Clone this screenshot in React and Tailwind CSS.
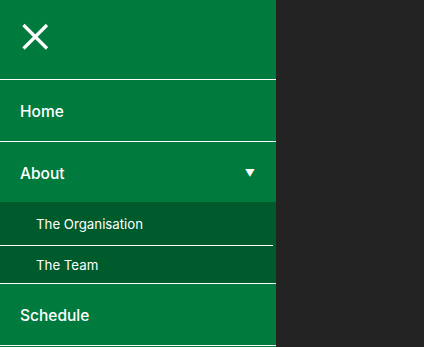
import React, { useState } from 'react';

export default function App() {
  const [open, setOpen] = useState(true);

  return (
    <div className="flex h-[347px] w-[424px] overflow-hidden bg-[#232323]" style={{ fontFamily: 'Inter, "Noto Sans", sans-serif' }}>
      {/* Side menu */}
      <nav className="w-[276px] shrink-0 bg-[#007a3d] text-white">
        <div className="flex h-[80px] items-center border-b border-white pl-[21px]">
          <svg width="28" height="28" viewBox="0 0 28 28" className="-mt-[6px]">
            <path d="M2.5 2 L26 25.5 M26 2 L2.5 25.5" stroke="white" strokeWidth="3.2" strokeLinecap="butt" />
          </svg>
        </div>

        <ul>
          <li className="flex h-[62px] items-center border-b border-white px-5 pt-[3px] text-[15.5px] font-medium">Home</li>
          <li className="border-b border-white">
            <button
              onClick={() => setOpen(!open)}
              className="flex h-[60px] w-full items-center justify-between px-5 pt-[3px] text-[15.5px] font-medium"
            >
              <span>About</span>
              <span className="mr-[1px] text-[10px]">▼</span>
            </button>
            {open && (
              <ul className="bg-[#005b2c] text-[13.25px]">
                <li className="mr-[3px] flex h-[44px] items-center border-b border-white pl-9 pt-[2px]">The Organisation</li>
                <li className="flex h-[37px] items-center pl-9 pt-[3px]">The Team</li>
              </ul>
            )}
          </li>
          <li className="flex h-[62px] items-center border-b border-white px-5 pt-[3px] text-[15.5px] font-medium">Schedule</li>
        </ul>
      </nav>
    </div>
  );
}
